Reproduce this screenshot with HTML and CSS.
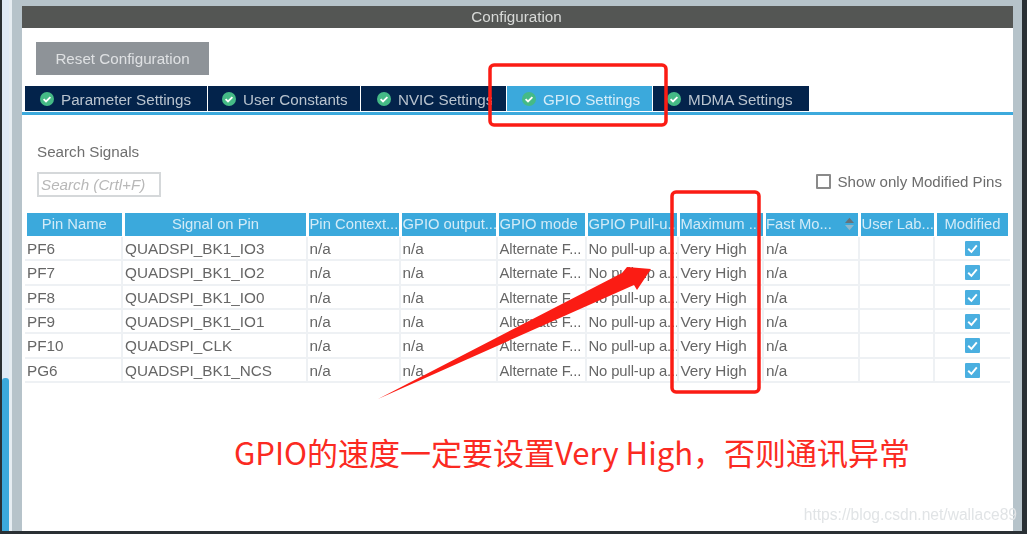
FILE: index.html
```html
<!DOCTYPE html>
<html lang="zh">
<head>
<meta charset="utf-8">
<title>Configuration</title>
<link rel="stylesheet" href="styles.css">
</head>
<body>
<div class="desk">
  <div class="rail"><div class="rail-fill"></div></div>
  <div class="frame">
    <main class="panel">
      <header class="title">Configuration</header>
      <div class="reset-row"><button class="reset">Reset Configuration</button></div>
      <nav class="tabs">
        <div class="tab t1"><svg class="ok" viewBox="0 0 14 14"><circle cx="7" cy="7" r="7"/><path d="M3.6 7.2l2.4 2.3 4.4-4.4"/></svg>Parameter Settings</div>
        <div class="tab t2"><svg class="ok" viewBox="0 0 14 14"><circle cx="7" cy="7" r="7"/><path d="M3.6 7.2l2.4 2.3 4.4-4.4"/></svg>User Constants</div>
        <div class="tab t3"><svg class="ok" viewBox="0 0 14 14"><circle cx="7" cy="7" r="7"/><path d="M3.6 7.2l2.4 2.3 4.4-4.4"/></svg><span class="clip">NVIC Settings</span></div>
        <div class="tab t4 active"><svg class="ok" viewBox="0 0 14 14"><circle cx="7" cy="7" r="7"/><path d="M3.6 7.2l2.4 2.3 4.4-4.4"/></svg>GPIO Settings</div>
        <div class="tab t5"><svg class="ok" viewBox="0 0 14 14"><circle cx="7" cy="7" r="7"/><path d="M3.6 7.2l2.4 2.3 4.4-4.4"/></svg>MDMA Settings</div>
      </nav>
      <div class="tools">
        <div class="search">
          <div class="search-label">Search Signals</div>
          <div class="search-box">Search (Crtl+F)</div>
        </div>
        <label class="modified"><span class="box"></span>Show only Modified Pins</label>
      </div>
      <div class="grid">
        <div class="th c">Pin Name</div><div class="th c">Signal on Pin</div><div class="th">Pin Context...</div><div class="th">GPIO output...</div><div class="th">GPIO mode</div><div class="th">GPIO Pull-u...</div><div class="th">Maximum ...</div><div class="th sort">Fast Mo...<svg class="arrows" viewBox="0 0 10 14"><path class="up" d="M5 0l5 6H0z"/><path class="down" d="M5 14L0 8h10z"/></svg></div><div class="th">User Lab...</div><div class="th c">Modified</div>

        <div class="td">PF6</div><div class="td">QUADSPI_BK1_IO3</div><div class="td">n/a</div><div class="td">n/a</div><div class="td tight">Alternate F...</div><div class="td tight">No pull-up a...</div><div class="td">Very High</div><div class="td">n/a</div><div class="td"></div><div class="td c last"><svg class="chk" viewBox="0 0 14 14"><rect width="14" height="14" rx="1"/><path d="M3 7.2l3 3 5-6.2"/></svg></div>
        <div class="td">PF7</div><div class="td">QUADSPI_BK1_IO2</div><div class="td">n/a</div><div class="td">n/a</div><div class="td tight">Alternate F...</div><div class="td tight">No pull-up a...</div><div class="td">Very High</div><div class="td">n/a</div><div class="td"></div><div class="td c last"><svg class="chk" viewBox="0 0 14 14"><rect width="14" height="14" rx="1"/><path d="M3 7.2l3 3 5-6.2"/></svg></div>
        <div class="td">PF8</div><div class="td">QUADSPI_BK1_IO0</div><div class="td">n/a</div><div class="td">n/a</div><div class="td tight">Alternate F...</div><div class="td tight">No pull-up a...</div><div class="td">Very High</div><div class="td">n/a</div><div class="td"></div><div class="td c last"><svg class="chk" viewBox="0 0 14 14"><rect width="14" height="14" rx="1"/><path d="M3 7.2l3 3 5-6.2"/></svg></div>
        <div class="td">PF9</div><div class="td">QUADSPI_BK1_IO1</div><div class="td">n/a</div><div class="td">n/a</div><div class="td tight">Alternate F...</div><div class="td tight">No pull-up a...</div><div class="td">Very High</div><div class="td">n/a</div><div class="td"></div><div class="td c last"><svg class="chk" viewBox="0 0 14 14"><rect width="14" height="14" rx="1"/><path d="M3 7.2l3 3 5-6.2"/></svg></div>
        <div class="td">PF10</div><div class="td">QUADSPI_CLK</div><div class="td">n/a</div><div class="td">n/a</div><div class="td tight">Alternate F...</div><div class="td tight">No pull-up a...</div><div class="td">Very High</div><div class="td">n/a</div><div class="td"></div><div class="td c last"><svg class="chk" viewBox="0 0 14 14"><rect width="14" height="14" rx="1"/><path d="M3 7.2l3 3 5-6.2"/></svg></div>
        <div class="td">PG6</div><div class="td">QUADSPI_BK1_NCS</div><div class="td">n/a</div><div class="td">n/a</div><div class="td tight">Alternate F...</div><div class="td tight">No pull-up a...</div><div class="td">Very High</div><div class="td">n/a</div><div class="td"></div><div class="td c last"><svg class="chk" viewBox="0 0 14 14"><rect width="14" height="14" rx="1"/><path d="M3 7.2l3 3 5-6.2"/></svg></div>
      </div>
    </main>
  </div>
</div>
<svg class="marks" viewBox="0 0 1027 534">
  <rect class="mark" x="490" y="65" width="176" height="60" rx="4"/>
  <rect class="mark" x="672" y="192" width="87" height="200" rx="4"/>
  <path class="arrow" d="M378 399 L622 273 L627 267 L651 269 L637 290 L634 285 Z"/>
</svg>
<p class="note">GPIO的速度一定要设置Very High，否则通讯异常</p>
<p class="watermark">https://blog.csdn.net/wallace89</p>
</body>
</html>
```
FILE: styles.css
```css
* { box-sizing: border-box; }
html, body { margin: 0; padding: 0; }
body {
  width: 1027px;
  height: 534px;
  overflow: hidden;
  background: #2a3034;
  font-family: "Liberation Sans", Arial, sans-serif;
  position: relative;
}
.desk {
  display: flex;
  height: 531px;
  padding-left: 2px;
  filter: blur(0.45px);
}
.rail {
  width: 7px;
  background: #dfeaf6;
  display: flex;
  flex-direction: column;
  justify-content: flex-end;
}
.rail-fill {
  height: 153px;
  background: #3ba9dc;
  border-radius: 3px 3px 0 0;
}
.frame {
  width: 1013px;
  background: #b6c3ca;
  padding: 6px 9px 0 10px;
  border-left: 3px solid #e6edf2;
}
.panel {
  width: 991px;
  height: 525px;
  background: #fff;
  display: flex;
  flex-direction: column;
}
.title {
  height: 22px;
  background: #545654;
  color: #d8dad8;
  font-size: 15.2px;
  line-height: 22px;
  text-align: center;
  padding-right: 2px;
}
.reset-row { padding: 14px 0 0 14px; }
.reset {
  display: block;
  width: 173px;
  height: 33px;
  border: 0;
  background: #8e9398;
  color: #dfe1e3;
  font: 15.2px "Liberation Sans", Arial, sans-serif;
  padding: 0;
}
.tabs {
  display: flex;
  margin-top: 11px;
  padding-left: 3px;
  height: 29px;
  border-bottom: 3px solid #3ba9dc;
  padding-bottom: 1px;
  gap: 1px;
  border-image: linear-gradient(#9fd5ef, #3ba9dc) 1;
}
.tab {
  height: 25px;
  background: #03234b;
  color: #b9c3ce;
  font-size: 15.2px;
  line-height: 25px;
  display: flex;
  align-items: center;
  padding: 2px 0 0 15px;
  white-space: nowrap;
  overflow: hidden;
}
.t1 { width: 182px; }
.t2 { width: 152px; padding-left: 14px; }
.t3 { width: 145px; padding-left: 16px; }
.t4 { width: 145px; }
.t5 { width: 156px; padding-left: 14px; }
.active { background: #3ba9dc; color: #d5ecf8; }
.clip { overflow: hidden; width: 94px; }
.ok { width: 14px; height: 14px; margin: -2px 7px 0 0; flex: none; }
.ok circle { fill: #45ba86; }
.ok path { fill: none; stroke: #fff; stroke-width: 1.8; }
.tools {
  display: flex;
  justify-content: space-between;
  align-items: flex-start;
  height: 97.5px;
  padding: 29px 11px 0 15px;
}
.search-label { color: #6f6f6f; font-size: 15.2px; line-height: 16px; margin-bottom: 12px; }
.search-box {
  width: 124px;
  height: 25px;
  border: 2px solid #d5d8da;
  color: #b8b8b8;
  font-size: 15.2px;
  font-style: italic;
  line-height: 21px;
  padding-left: 2px;
}
.modified {
  display: flex;
  align-items: center;
  color: #6c6c6c;
  font-size: 15.1px;
  line-height: 17px;
  gap: 7px;
  margin-top: 28.5px;
}
.box { width: 15px; height: 15px; border: 2px solid #8a8a8a; border-radius: 1px; }
.grid {
  display: grid;
  grid-template-columns: 98px 184.5px 93px 97px 89px 92px 85.5px 95.5px 75.5px 74.5px;
  grid-auto-rows: 24.4px;
  padding-left: 3px;
  width: 991px;
}
.th {
  background: #3ba9dc;
  color: #d3ebf7;
  font-size: 14.8px;
  line-height: 23px;
  height: 23.5px;
  margin: 0 1.5px;
  white-space: nowrap;
  overflow: hidden;
  position: relative;
  padding-left: 0.5px;
}
.c { text-align: center; }
.arrows { position: absolute; right: 4px; top: 4px; width: 9px; height: 14px; }
.up { fill: #66727a; }
.down { fill: #8fb7cb; }
.td {
  border-bottom: 2px solid #eef1f4;
  border-right: 2px solid #eef1f4;
  color: #666;
  font-size: 15.3px;
  line-height: 24px;
  padding-left: 2px;
  white-space: nowrap;
  overflow: hidden;
}
.tight { font-size: 14.8px; letter-spacing: -0.1px; }
.last { border-right: 0; padding-left: 0; }
.chk { width: 15px; height: 15px; margin-top: 4px; }
.chk rect { fill: #4aafe0; }
.chk path { fill: none; stroke: #fff; stroke-width: 1.8; }
.marks { position: absolute; left: 0; top: 0; width: 1027px; height: 534px; }
.mark { fill: none; stroke: #fb1c14; stroke-width: 3.5; }
.arrow { fill: #fb1c14; }
.note {
  position: absolute;
  left: 234px;
  top: 432px;
  margin: 0;
  color: #fb2a22;
  font-family: "Noto Sans CJK SC", "Noto Sans", sans-serif;
  font-size: 31px;
  line-height: 40px;
  white-space: nowrap;
}
.watermark {
  position: absolute;
  right: 10px;
  top: 505px;
  margin: 0;
  color: #e1e4e6;
  font-size: 15.6px;
  line-height: 20px;
  filter: blur(0.4px);
}
```
